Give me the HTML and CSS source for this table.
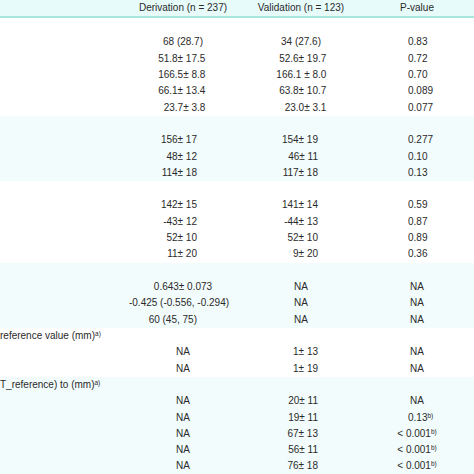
FILE: index.html
```html
<!DOCTYPE html>
<html>
<head>
<meta charset="utf-8">
<link rel="stylesheet" href="styles.css">
</head>
<body>
<table class="tbl">
  <colgroup>
    <col class="w0"><col class="w1"><col class="w2"><col class="w3">
  </colgroup>
  <thead>
    <tr>
      <th></th>
      <th>Derivation (n = 237)</th>
      <th>Validation (n = 123)</th>
      <th>P-value</th>
    </tr>
  </thead>
  <tbody>
    <tr><td class="lab"></td><td></td><td></td><td></td></tr>
    <tr><td class="lab"></td><td class="c">68 (28.7)</td><td class="c">34 (27.6)</td><td class="p">0.83</td></tr>
    <tr><td class="lab"></td><td class="d1"><span class="i">51.8± 17</span><span class="f">.5</span></td><td class="d2"><span class="i">52.6± 19</span><span class="f">.7</span></td><td class="p">0.72</td></tr>
    <tr><td class="lab"></td><td class="d1"><span class="i">166.5± 8</span><span class="f">.8</span></td><td class="d2"><span class="i">166.1 ± 8</span><span class="f">.0</span></td><td class="p">0.70</td></tr>
    <tr><td class="lab"></td><td class="d1"><span class="i">66.1± 13</span><span class="f">.4</span></td><td class="d2"><span class="i">63.8± 10</span><span class="f">.7</span></td><td class="p">0.089</td></tr>
    <tr><td class="lab"></td><td class="d1"><span class="i">23.7± 3</span><span class="f">.8</span></td><td class="d2"><span class="i">23.0± 3</span><span class="f">.1</span></td><td class="p">0.077</td></tr>
  </tbody>
  <tbody class="band">
    <tr><td class="lab"></td><td></td><td></td><td></td></tr>
    <tr><td class="lab"></td><td class="d1"><span class="i">156± 17</span></td><td class="d2"><span class="i">154± 19</span></td><td class="p">0.277</td></tr>
    <tr><td class="lab"></td><td class="d1"><span class="i">48± 12</span></td><td class="d2"><span class="i">46± 11</span></td><td class="p">0.10</td></tr>
    <tr><td class="lab"></td><td class="d1"><span class="i">114± 18</span></td><td class="d2"><span class="i">117± 18</span></td><td class="p">0.13</td></tr>
  </tbody>
  <tbody>
    <tr><td class="lab"></td><td></td><td></td><td></td></tr>
    <tr><td class="lab"></td><td class="d1"><span class="i">142± 15</span></td><td class="d2"><span class="i">141± 14</span></td><td class="p">0.59</td></tr>
    <tr><td class="lab"></td><td class="d1"><span class="i">-43± 12</span></td><td class="d2"><span class="i">-44± 13</span></td><td class="p">0.87</td></tr>
    <tr><td class="lab"></td><td class="d1"><span class="i">52± 10</span></td><td class="d2"><span class="i">52± 10</span></td><td class="p">0.89</td></tr>
    <tr><td class="lab"></td><td class="d1"><span class="i">11± 20</span></td><td class="d2"><span class="i">9± 20</span></td><td class="p">0.36</td></tr>
  </tbody>
  <tbody class="band">
    <tr><td class="lab"></td><td></td><td></td><td></td></tr>
    <tr><td class="lab"></td><td class="c">0.643± 0.073</td><td class="c">NA</td><td class="c">NA</td></tr>
    <tr><td class="lab"></td><td class="c cl">-0.425 (-0.556, -0.294)</td><td class="c">NA</td><td class="c">NA</td></tr>
    <tr><td class="lab"></td><td class="d1"><span class="i">60 (45, 75)</span></td><td class="c">NA</td><td class="c">NA</td></tr>
  </tbody>
  <tbody>
    <tr><td class="lab" colspan="4">reference value (mm)<sup class="fn">a)</sup></td></tr>
    <tr><td class="lab"></td><td class="c">NA</td><td class="d2"><span class="i">1± 13</span></td><td class="c">NA</td></tr>
    <tr><td class="lab"></td><td class="c">NA</td><td class="d2"><span class="i">1± 19</span></td><td class="c">NA</td></tr>
  </tbody>
  <tbody class="band">
    <tr><td class="lab" colspan="4">T_reference) to (mm)<sup class="fn">a)</sup></td></tr>
    <tr><td class="lab"></td><td class="c">NA</td><td class="d2"><span class="i">20± 11</span></td><td class="c">NA</td></tr>
    <tr><td class="lab"></td><td class="c">NA</td><td class="d2"><span class="i">19± 11</span></td><td class="p">0.13<sup class="fn">b)</sup></td></tr>
    <tr><td class="lab"></td><td class="c">NA</td><td class="d2"><span class="i">67± 13</span></td><td class="c">&lt; 0.001<sup class="fn">b)</sup></td></tr>
    <tr><td class="lab"></td><td class="c">NA</td><td class="d2"><span class="i">56± 11</span></td><td class="c">&lt; 0.001<sup class="fn">b)</sup></td></tr>
    <tr><td class="lab"></td><td class="c">NA</td><td class="d2"><span class="i">76± 18</span></td><td class="c">&lt; 0.001<sup class="fn">b)</sup></td></tr>
  </tbody>
</table>
</body>
</html>
```

FILE: styles.css
```css
html, body {
  margin: 0;
  padding: 0;
  background: #ffffff;
  overflow: hidden;
}

body {
  width: 474px;
  height: 474px;
  font-family: "Liberation Sans", Arial, sans-serif;
  font-size: 10px;
  color: #2a2a2a;
}

.tbl {
  width: 474px;
  border-collapse: collapse;
  table-layout: fixed;
}

.w0 { width: 124px; }
.w1 { width: 118px; }
.w2 { width: 118px; }
.w3 { width: 114px; }

.tbl th {
  height: 16px;
  padding: 0;
  background: #e6fbfa;
  border-bottom: 2px solid #a9e6de;
  font-weight: normal;
  text-align: center;
  line-height: 16px;
  white-space: nowrap;
}

.tbl td {
  height: 16.32px;
  padding: 0;
  line-height: 16.32px;
  white-space: nowrap;
  overflow: visible;
}

.band td {
  background: #f2fcfc;
}

.lab {
  text-align: left;
}

.c {
  text-align: center;
}

.cl {
  text-indent: -8px;
}

.p {
  text-align: left;
  padding-left: 48px !important;
}

.d1 .i,
.d2 .i {
  display: inline-block;
  text-align: right;
}

.d1 .i { width: 73px; }
.d2 .i { width: 76px; }

.fn {
  font-size: 6.5px;
  line-height: 0;
  vertical-align: 3px;
}
```
